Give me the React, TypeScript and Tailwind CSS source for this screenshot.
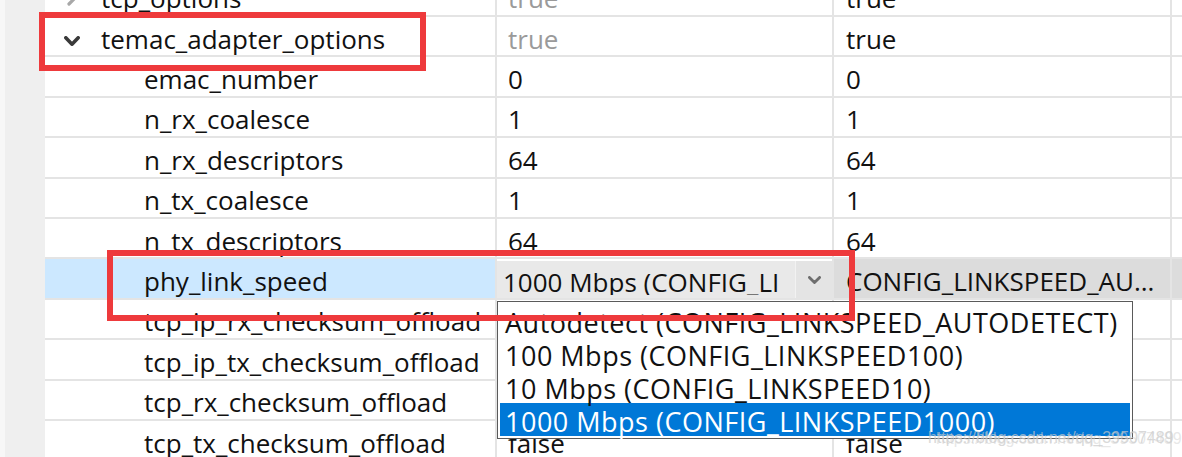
import React from "react";

type Row = {
  name: string;
  level: 0 | 1;
  chevron?: "right" | "down";
  v2: string;
  v3: string;
  gray2?: boolean;
};

const rows: Row[] = [
  { name: "tcp_options", level: 0, chevron: "right", v2: "true", v3: "true", gray2: true },
  { name: "temac_adapter_options", level: 0, chevron: "down", v2: "true", v3: "true", gray2: true },
  { name: "emac_number", level: 1, v2: "0", v3: "0" },
  { name: "n_rx_coalesce", level: 1, v2: "1", v3: "1" },
  { name: "n_rx_descriptors", level: 1, v2: "64", v3: "64" },
  { name: "n_tx_coalesce", level: 1, v2: "1", v3: "1" },
  { name: "n_tx_descriptors", level: 1, v2: "64", v3: "64" },
  { name: "phy_link_speed", level: 1, v2: "", v3: "" },
  { name: "tcp_ip_rx_checksum_offload", level: 1, v2: "true", v3: "true" },
  { name: "tcp_ip_tx_checksum_offload", level: 1, v2: "true", v3: "true" },
  { name: "tcp_rx_checksum_offload", level: 1, v2: "false", v3: "false" },
  { name: "tcp_tx_checksum_offload", level: 1, v2: "false", v3: "false" },
];

const font = { fontFamily: '"Open Sans", "Noto Sans", sans-serif' };

function ChevronDown({ color, w = 15, h = 9, sw = 3.4 }: { color: string; w?: number; h?: number; sw?: number }) {
  return (
    <svg width={w} height={h} viewBox={`0 0 ${w} ${h}`}>
      <polyline
        points={`${sw / 2},${sw / 2} ${w / 2},${h - sw / 2} ${w - sw / 2},${sw / 2}`}
        fill="none"
        stroke={color}
        strokeWidth={sw}
        strokeLinecap="round"
        strokeLinejoin="round"
      />
    </svg>
  );
}

function ChevronRight({ color }: { color: string }) {
  return (
    <svg width="10" height="16" viewBox="0 0 10 16">
      <polyline points="2,2 8,8 2,14" fill="none" stroke={color} strokeWidth="3.2" strokeLinecap="round" strokeLinejoin="round" />
    </svg>
  );
}

function TreeRow({ r }: { r: Row }) {
  const isPhy = r.name === "phy_link_speed";
  return (
    <div className="flex h-[40.4px] shrink-0 border-b-2 border-[#e4e4e4]">
      <div
        className={`relative flex w-[452px] shrink-0 items-center border-r-2 border-[#e4e4e4] pt-[5px] ${
          isPhy ? "bg-[#cce8ff]" : "bg-white"
        } ${r.level === 0 ? "pl-[56px]" : "pl-[99px]"}`}
      >
        {r.chevron === "down" && (
          <span className="absolute left-[19px] top-[19px] flex">
            <ChevronDown color="#3a3a3a" w={16} h={10} sw={3.6} />
          </span>
        )}
        {r.chevron === "right" && (
          <span className="absolute left-[22px] top-[13px] flex">
            <ChevronRight color="#a8a8a8" />
          </span>
        )}
        <span className="whitespace-nowrap text-[26px] leading-none text-[#111]">{r.name}</span>
      </div>
      {isPhy ? (
        <>
          <div className="flex w-[337px] shrink-0 border-r-2 border-[#e4e4e4] pt-[2px]">
            <div className="flex flex-1 items-center overflow-hidden bg-[#e9e9e9] pl-[6px]">
              <span className="overflow-hidden whitespace-nowrap pt-[4px] text-[26px] leading-none text-[#111]">
                1000 Mbps (CONFIG_LI
              </span>
              <div className="ml-auto flex h-full w-[37px] shrink-0 items-center justify-center border-l border-[#f2f2f2] bg-[#e4e4e4]">
                <ChevronDown color="#6e6e6e" w={13} h={8} sw={2.8} />
              </div>
            </div>
          </div>
          <div className="flex w-[338px] shrink-0 items-center overflow-hidden border-r-2 border-[#e4e4e4] bg-[#dcdcdc] pl-[12px] pt-[5px]">
            <span className="whitespace-nowrap text-[26px] leading-none text-[#111]">CONFIG_LINKSPEED_AU...</span>
          </div>
          <div className="flex-1 bg-[#dcdcdc]" />
        </>
      ) : (
        <>
          <div className="flex w-[337px] shrink-0 items-center border-r-2 border-[#e4e4e4] pl-[11px] pt-[5px]">
            <span className={`whitespace-nowrap text-[26px] leading-none ${r.gray2 ? "text-[#9a9a9a]" : "text-[#111]"}`}>
              {r.v2}
            </span>
          </div>
          <div className="flex w-[338px] shrink-0 items-center border-r-2 border-[#e4e4e4] pl-[12px] pt-[5px]">
            <span className="whitespace-nowrap text-[26px] leading-none text-[#111]">{r.v3}</span>
          </div>
          <div className="flex-1" />
        </>
      )}
    </div>
  );
}

const options = [
  "Autodetect (CONFIG_LINKSPEED_AUTODETECT)",
  "100 Mbps (CONFIG_LINKSPEED100)",
  "10 Mbps (CONFIG_LINKSPEED10)",
  "1000 Mbps (CONFIG_LINKSPEED1000)",
];

export default function App() {
  return (
    <div className="relative flex h-[457px] w-[1182px] overflow-hidden bg-white" style={font}>
      <div className="w-[45px] shrink-0 border-l-[5px] border-[#f7f7f7] bg-[#efefef]" />
      <div className="flex flex-1 flex-col mt-[-23.4px]">
        {rows.map((r) => (
          <TreeRow key={r.name} r={r} />
        ))}
      </div>

      {/* dropdown list */}
      <div className="absolute left-[497px] top-[301px] w-[636px] border border-[#5a5a5a] bg-white p-[2px]">
        {options.map((o, i) => (
          <div
            key={o}
            className={`flex h-[33px] items-center pl-[5px] pt-[3px] whitespace-nowrap text-[27px] leading-none tracking-[0.5px] ${
              i === 3 ? "bg-[#0078d7] text-white" : "text-[#111]"
            }`}
          >
            {o}
          </div>
        ))}
      </div>

      {/* watermark */}
      <div className="pointer-events-none absolute left-[928px] top-[430px] whitespace-nowrap text-[16px] leading-none text-[#c8c8c8]/70" style={{ fontFamily: '"Liberation Sans", Arial, sans-serif' }}>
        https://blog.csdn.net/qq_39507489
      </div>
      <div className="pointer-events-none absolute left-[936px] top-[431px] whitespace-nowrap text-[16px] leading-none text-[#d0d0d0]/50" style={{ fontFamily: '"Liberation Sans", Arial, sans-serif' }}>
        https://blog.csdn.net/qq_39507489
      </div>

      {/* red highlight boxes */}
      <div className="pointer-events-none absolute left-[39px] top-[12px] h-[59px] w-[387px] border-[6px] border-[#ee3a3c]" />
      <div className="pointer-events-none absolute left-[107px] top-[250px] h-[71px] w-[748px] border-[6px] border-[#ee3a3c]" />
    </div>
  );
}
